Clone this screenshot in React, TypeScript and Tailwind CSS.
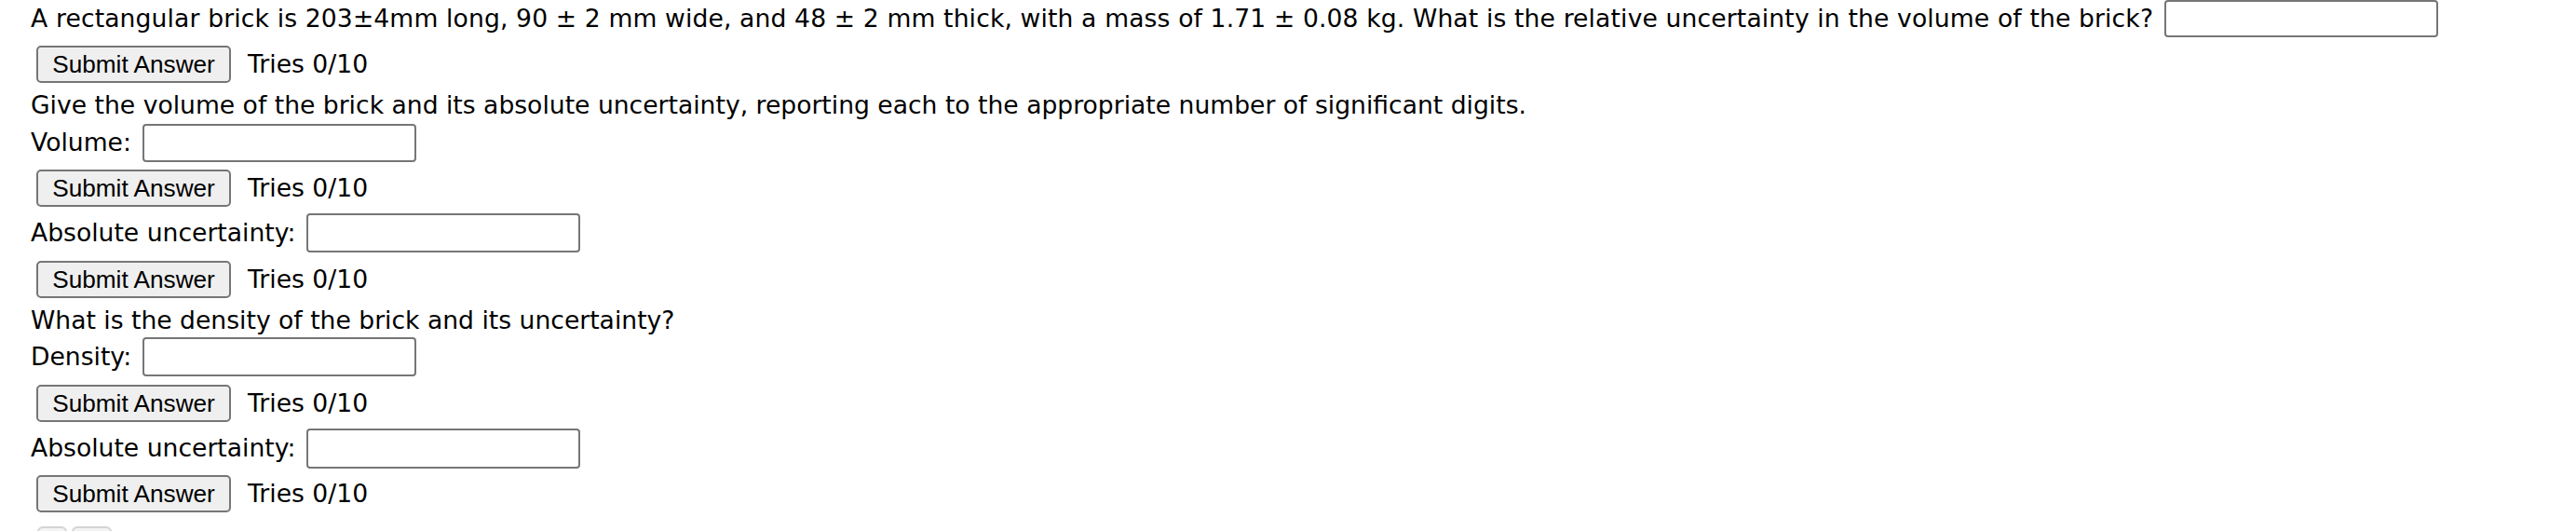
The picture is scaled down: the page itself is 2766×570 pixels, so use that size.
import type { ReactNode } from 'react'

const body = "font-['DejaVu_Sans',Verdana,sans-serif] text-[26.6px] leading-none text-black"

function AnswerBox({ className = '' }: { className?: string }) {
  return (
    <input
      type="text"
      className={`h-full w-[294px] rounded-[4px] border-2 border-[#767676] bg-white ${className}`}
    />
  )
}

function SubmitRow({ className = '' }: { className?: string }) {
  return (
    <div className={`flex h-[40px] items-center ${className}`}>
      <button className="ml-[6px] h-full w-[209px] rounded-[5px] border-2 border-[#767676] bg-[#efefef] font-['Liberation_Sans',Arial,sans-serif] text-[26.2px] text-black">
        Submit Answer
      </button>
      <span className="ml-[18px]">Tries 0/10</span>
    </div>
  )
}

function Field({ label, h, className = '' }: { label: string; h: string; className?: string }) {
  return (
    <div className={`flex items-center ${h} ${className}`}>
      <span className="whitespace-nowrap">{label}</span>
      <AnswerBox className="ml-[12px]" />
    </div>
  )
}

function Prompt({ children, className = '' }: { children: ReactNode; className?: string }) {
  return <div className={`flex h-[32px] items-center whitespace-nowrap ${className}`}>{children}</div>
}

export default function App() {
  return (
    <div className={`${body} h-[570px] overflow-hidden bg-white pl-[33px]`}>
      <div className="flex h-[40px] items-center">
        <span className="whitespace-nowrap tracking-[0.13px]">
          A rectangular brick is 203±4mm long, 90 ± 2 mm wide, and 48 ± 2 mm thick, with a mass of 1.71 ± 0.08 kg. What is the relative uncertainty in the volume of the brick?
        </span>
        <AnswerBox className="ml-[12px]" />
      </div>
      <SubmitRow className="mt-[9px]" />

      <Prompt className="mt-[8px]">
        Give the volume of the brick and its absolute uncertainty, reporting each to the appropriate number of significant digits.
      </Prompt>
      <Field label="Volume:" h="h-[41px]" className="mt-[4px]" />
      <SubmitRow className="mt-[8px]" />
      <Field label="Absolute uncertainty:" h="h-[42px]" className="mt-[7px]" />
      <SubmitRow className="mt-[9px]" />

      <Prompt className="mt-[8px]">What is the density of the brick and its uncertainty?</Prompt>
      <Field label="Density:" h="h-[42px]" className="mt-[2px]" />
      <SubmitRow className="mt-[9px]" />
      <Field label="Absolute uncertainty:" h="h-[43px]" className="mt-[7px]" />
      <SubmitRow className="mt-[7px]" />

      <div className="mt-[15px] ml-[7px] flex gap-[5px]">
        <div className="h-[40px] w-[32px] rounded-[6px] border-2 border-[#d4d4d4] bg-[#f3f3f3]" />
        <div className="h-[40px] w-[43px] rounded-[6px] border-2 border-[#d4d4d4] bg-[#f3f3f3]" />
      </div>
    </div>
  )
}
